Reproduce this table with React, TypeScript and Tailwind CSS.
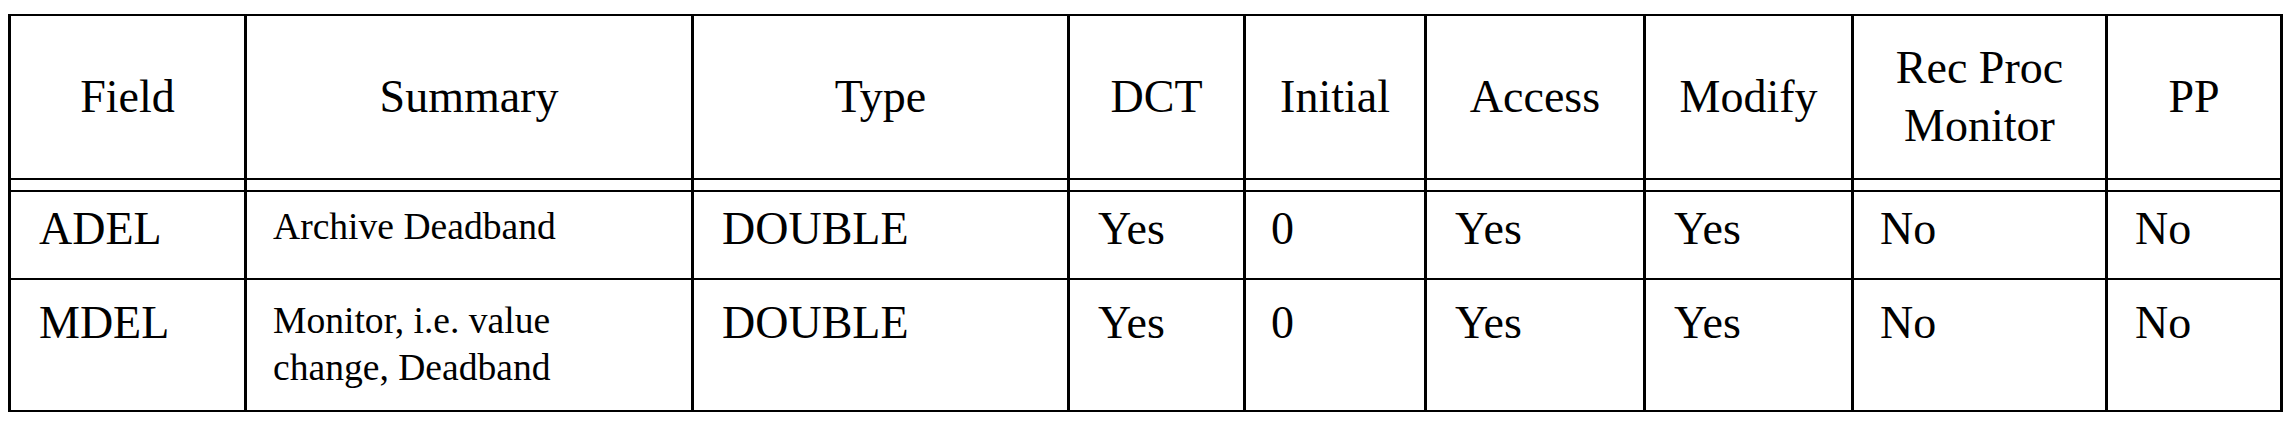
import React from "react";

const headers: { label: React.ReactNode }[] = [
  { label: "Field" },
  { label: "Summary" },
  { label: "Type" },
  { label: "DCT" },
  { label: "Initial" },
  { label: "Access" },
  { label: "Modify" },
  {
    label: (
      <>
        Rec Proc
        <br />
        Monitor
      </>
    ),
  },
  { label: "PP" },
];

const padLeft = [
  "pl-[28px]",
  "pl-[26px]",
  "pl-[28px]",
  "pl-[28px]",
  "pl-[25px]",
  "pl-[28px]",
  "pl-[28px]",
  "pl-[26px]",
  "pl-[27px]",
];

type Row = { cells: React.ReactNode[]; big: string; small: string };

const rows: Row[] = [
  {
    cells: ["ADEL", "Archive Deadband", "DOUBLE", "Yes", "0", "Yes", "Yes", "No", "No"],
    big: "pt-[14px]",
    small: "pt-[11px]",
  },
  {
    cells: [
      "MDEL",
      (
        <>
          Monitor, i.e. value
          <br />
          change, Deadband
        </>
      ),
      "DOUBLE",
      "Yes",
      "0",
      "Yes",
      "Yes",
      "No",
      "No",
    ],
    big: "pt-[20px]",
    small: "pt-[17px]",
  },
];

export default function App() {
  return (
    <div className="w-[2292px] h-[424px] bg-white pt-[14px] pl-[8px] text-black font-['Liberation_Serif','Tinos','Times_New_Roman',serif]">
      <div className="grid w-[2275px] bg-black px-[3px] py-[2px] gap-x-[3px] gap-y-[2px] grid-cols-[233px_444px_373px_173px_178px_216px_205px_251px_172px] grid-rows-[162px_10px_86px_130px]">
        {headers.map((h, i) => (
          <div
            key={`h${i}`}
            className="bg-white flex items-center justify-center text-center text-[46px] leading-[58px]"
          >
            <div>{h.label}</div>
          </div>
        ))}
        {headers.map((_, i) => (
          <div key={`s${i}`} className="bg-white" />
        ))}
        {rows.map((r, ri) =>
          r.cells.map((c, ci) =>
            ci === 1 ? (
              <div
                key={`r${ri}c${ci}`}
                className={`bg-white text-[37.6px] leading-[47px] ${padLeft[ci]} ${r.small}`}
              >
                {c}
              </div>
            ) : (
              <div
                key={`r${ri}c${ci}`}
                className={`bg-white text-[46px] leading-none ${padLeft[ci]} ${r.big}`}
              >
                {c}
              </div>
            )
          )
        )}
      </div>
    </div>
  );
}
